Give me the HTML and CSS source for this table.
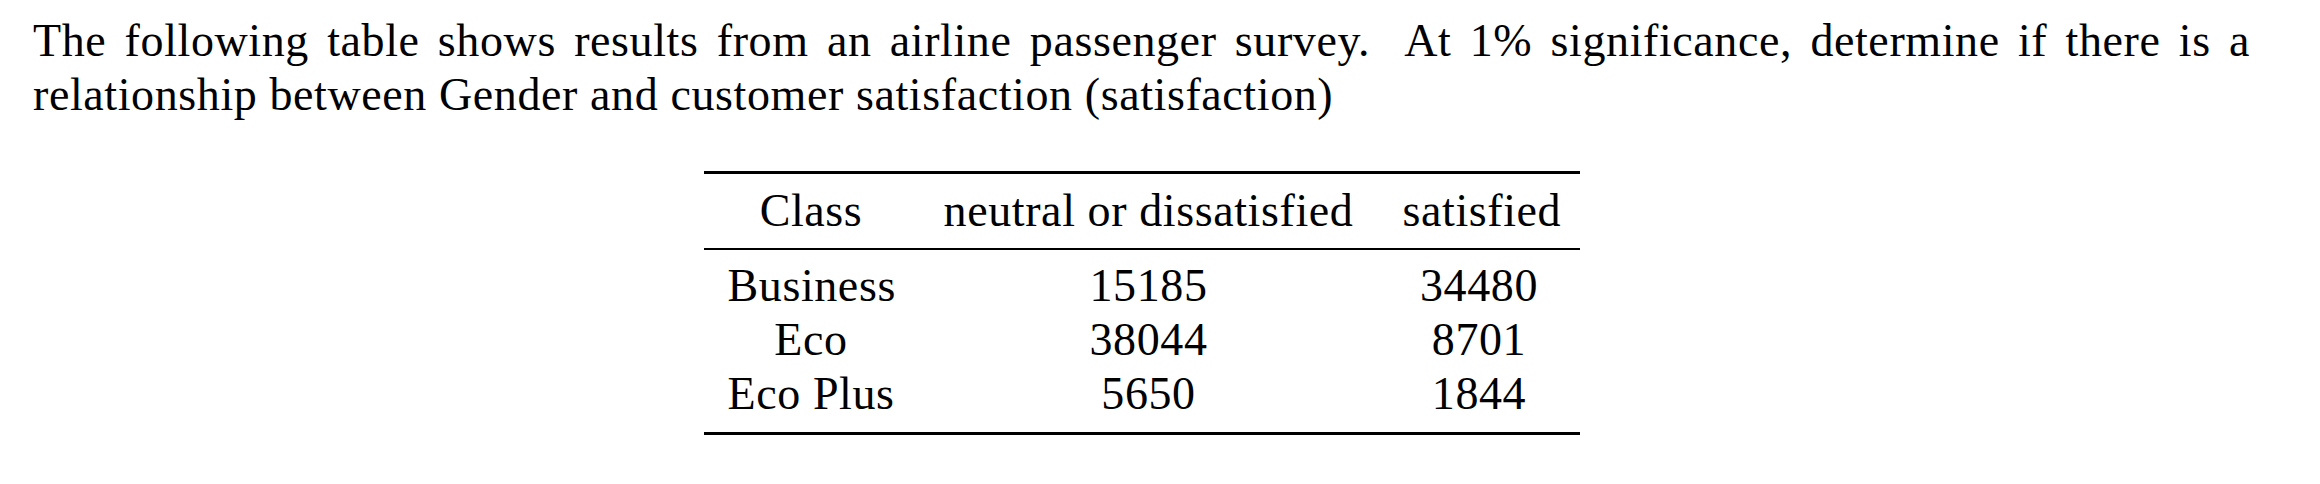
FILE: index.html
```html
<!DOCTYPE html>
<html lang="en">
<head>
    <meta charset="UTF-8">
    <meta name="viewport" content="width=device-width, initial-scale=1.0">
    <title>Airline Passenger Survey</title>
    <link rel="stylesheet" href="styles.css">
</head>
<body>
    <div class="page">
        <p class="question">
            <span class="line-full">The following table shows results from an airline passenger survey.&nbsp; At 1% significance, determine if there is a</span>
            <span class="line-last">relationship between Gender and customer satisfaction (satisfaction)</span>
        </p>

        <table class="survey">
            <colgroup>
                <col class="col-class">
                <col class="col-neutral">
                <col class="col-satisfied">
            </colgroup>
            <thead>
                <tr>
                    <th>Class</th>
                    <th>neutral or dissatisfied</th>
                    <th>satisfied</th>
                </tr>
            </thead>
            <tbody>
                <tr class="first-row">
                    <td>Business</td>
                    <td>15185</td>
                    <td>34480</td>
                </tr>
                <tr>
                    <td>Eco</td>
                    <td>38044</td>
                    <td>8701</td>
                </tr>
                <tr class="last-row">
                    <td>Eco Plus</td>
                    <td>5650</td>
                    <td>1844</td>
                </tr>
            </tbody>
        </table>
    </div>
</body>
</html>
```

FILE: styles.css
```css
* {
    margin: 0;
    padding: 0;
    box-sizing: border-box;
}

body {
    font-family: 'Liberation Serif', 'Times New Roman', serif;
    font-size: 46px;
    line-height: 54px;
    letter-spacing: 0.6px;
    color: #000;
    background: #fff;
}

.page {
    width: 2250px;
    padding: 14px 0 0 33px;
}

.question {
    width: 2217px;
}

.question span {
    display: block;
}

/* first line is set full width like the typeset original */
.line-full {
    text-align: justify;
    text-align-last: justify;
}

.line-last {
    text-align: left;
}

.survey {
    margin: 49px auto 0;
    width: 876px;
    table-layout: fixed;
    border-collapse: separate;
    border-spacing: 0;
    border-top: 3px solid #000;
    border-bottom: 3px solid #000;
}

.col-class {
    width: 215px;
}

.col-neutral {
    width: 460px;
}

.col-satisfied {
    width: 201px;
}

.survey th,
.survey td {
    padding: 0 24px;
    text-align: center;
    font-weight: normal;
    white-space: nowrap;
}

.survey th {
    padding-top: 10px;
    padding-bottom: 10px;
    border-bottom: 2px solid #000;
}

.survey .first-row td {
    padding-top: 9px;
}

.survey .last-row td {
    padding-bottom: 11px;
}
```
